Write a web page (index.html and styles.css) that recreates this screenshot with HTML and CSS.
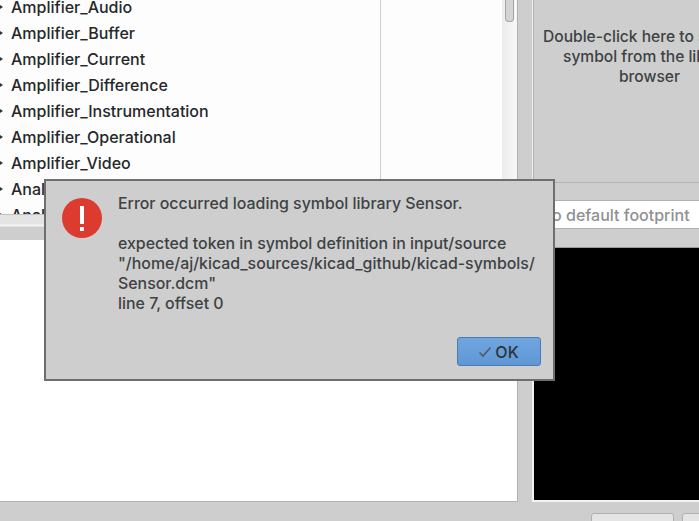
FILE: index.html
```html
<!DOCTYPE html>
<html lang="en">
<head>
  <meta charset="UTF-8">
  <title>Symbol Library Browser</title>
  <link rel="stylesheet" href="styles.css">
</head>
<body>

<div class="window">
  <div class="main">
    <div class="left">
      <div class="lib-pane">
        <ul class="lib-list">
          <li><span class="arrow"></span>Amplifier_Audio</li>
          <li><span class="arrow"></span>Amplifier_Buffer</li>
          <li><span class="arrow"></span>Amplifier_Current</li>
          <li><span class="arrow"></span>Amplifier_Difference</li>
          <li><span class="arrow"></span>Amplifier_Instrumentation</li>
          <li><span class="arrow"></span>Amplifier_Operational</li>
          <li><span class="arrow"></span>Amplifier_Video</li>
          <li><span class="arrow"></span>Analog</li>
          <li><span class="arrow"></span>Analog_ADC</li>
        </ul>
        <div class="col-line"></div>
        <div class="scrollbar"><div class="thumb"></div></div>
      </div>
      <div class="sash"></div>
      <div class="desc-pane"></div>
    </div>
    <div class="right">
      <div class="symbol-box">
        <p>Double-click here to select a<br>symbol from the library<br>browser</p>
      </div>
      <div class="footprint-row">
        <div class="footprint-input">No default footprint</div>
      </div>
      <div class="footprint-view"></div>
    </div>
  </div>
  <div class="bottom">
    <button class="btn-cancel"></button>
    <button class="btn-ok"></button>
  </div>
</div>

<div class="dialog">
  <svg class="err-icon" width="40" height="40" viewBox="0 0 40 40">
    <circle cx="20" cy="20" r="20" fill="#de3b30"/>
    <rect x="18" y="8" width="4" height="18" fill="#fff"/>
    <rect x="18" y="29" width="4" height="4" fill="#fff"/>
  </svg>
  <div class="dialog-body">
    <div class="dialog-text">
      <p>Error occurred loading symbol library Sensor.</p>
      <p>expected token in symbol definition in input/source<br>"/home/aj/kicad_sources/kicad_github/kicad-symbols/<br>Sensor.dcm"<br>line 7, offset 0</p>
    </div>
    <div class="dialog-actions">
      <button class="ok">
        <svg width="14" height="12" viewBox="0 0 14 12"><path d="M1.5 6.5 L5 10 L12.5 1.5" fill="none" stroke="#55595f" stroke-width="1.6"/></svg>
        OK
      </button>
    </div>
  </div>
</div>

</body>
</html>
```

FILE: styles.css
```css
html, body {
  margin: 0;
  height: 100%;
  overflow: hidden;
}
body {
  font-family: 'Inter', sans-serif;
  font-weight: 500;
  background: #cecece;
  color: #2e3436;
  position: relative;
}
.window {
  height: 521px;
  display: flex;
  flex-direction: column;
}
.main {
  height: 503px;
  display: flex;
}
.left {
  width: 518px;
  display: flex;
  flex-direction: column;
  border-right: 1px solid #b0b0b0;
  box-sizing: border-box;
}
.lib-pane {
  height: 214px;
  background: #fdfdfd;
  display: flex;
  overflow: hidden;
}
.lib-list {
  list-style: none;
  margin: -6px 0 0;
  padding: 0;
  width: 380px;
  font-size: 16px;
  color: #25282a;
}
.lib-list li {
  height: 26px;
  line-height: 26px;
  display: flex;
  align-items: center;
}
.arrow {
  width: 0;
  height: 0;
  margin: 0 8px 0 0;
  border-left: 3px solid #2e3436;
  border-top: 2.5px solid transparent;
  border-bottom: 2.5px solid transparent;
}
.col-line {
  width: 1px;
  background: #cfcfcf;
}
.scrollbar {
  margin-left: auto;
  width: 15px;
  background: linear-gradient(to right, #ececec, #f8f8f8);
}
.thumb {
  width: 7px;
  height: 21px;
  margin: 0 0 0 3px;
  border: 1px solid #a4a4a4;
  border-top: 0;
  border-radius: 0 0 4px 4px;
  background: #d4d4d4;
}
.sash {
  height: 26px;
  background: linear-gradient(to bottom, #e4e4e4 0, #e4e4e4 9px, #f4f4f4 10px, #f4f4f4 11px, #cecece 12px);
  border-top: 1px solid #c0c0c0;
  box-sizing: border-box;
}
.desc-pane {
  flex: 1;
  background: #fff;
  border-bottom: 1px solid #b0b0b0;
}
.right {
  flex: 1;
  margin-left: 14px;
  min-width: 0;
  display: flex;
  flex-direction: column;
}
.symbol-box {
  height: 183px;
  border-left: 1px solid #eeeeee;
  border-bottom: 1px solid #b4b4b4;
  box-sizing: border-box;
  box-shadow: inset 1px 0 0 #b4b4b4;
  font-size: 15.6px;
  line-height: 20px;
  color: #3d4244;
  overflow: hidden;
}
.symbol-box p {
  margin: 27px 0 0;
  width: 233px;
  text-align: center;
  white-space: nowrap;
}
.footprint-row {
  height: 64px;
  display: flex;
  align-items: flex-start;
  box-sizing: border-box;
  padding-top: 17px;
}
.footprint-input {
  width: 100%;
  height: 29px;
  line-height: 29px;
  box-sizing: border-box;
  background: #fff;
  border-top: 1px solid #b0b0b0;
  border-bottom: 1px solid #b0b0b0;
  font-size: 16px;
  color: #8f9192;
  white-space: nowrap;
  text-indent: 8px;
}
.footprint-view {
  height: 255px;
  background: #000;
  border-left: 2px solid #f2f2f2;
  border-bottom: 2px solid #f2f2f2;
  border-top: 1px solid #9a9a9a;
  box-sizing: border-box;
}
.bottom {
  flex: 1;
  display: flex;
  justify-content: flex-end;
  align-items: flex-start;
  gap: 8px;
  padding-top: 11px;
}
.bottom button {
  height: 30px;
  padding: 0;
  background: #e4e4e4;
  border: 1px solid #b0b0b0;
  border-radius: 3px;
}
.btn-cancel { width: 83px; }
.btn-ok { width: 40px; margin-right: -23px; }

.dialog {
  position: absolute;
  left: 44px;
  top: 179px;
  width: 511px;
  height: 202px;
  box-sizing: border-box;
  background: #cecece;
  border: 2px solid #6e6e6e;
  display: flex;
  font-size: 15.9px;
  line-height: 20px;
  color: #3d4244;
}
.err-icon {
  margin: 17px 0 0 16px;
  flex: none;
}
.dialog-body {
  flex: 1;
  display: flex;
  flex-direction: column;
  padding: 13px 12px 13px 16px;
}
.dialog-text {
  flex: 1;
}
.dialog-text p {
  margin: 0 0 20px;
  white-space: nowrap;
}
.dialog-actions {
  display: flex;
  justify-content: flex-end;
}
.ok {
  width: 84px;
  height: 29px;
  display: flex;
  align-items: center;
  justify-content: center;
  gap: 3px;
  padding: 0 1px 0 0;
  border: 1px solid #4a7bb0;
  border-radius: 3px;
  background: linear-gradient(to bottom, #6fa6e0, #5f97d6);
  font-family: 'Inter', sans-serif;
  font-weight: 500;
  font-size: 16px;
  color: #2e3436;
}
```
